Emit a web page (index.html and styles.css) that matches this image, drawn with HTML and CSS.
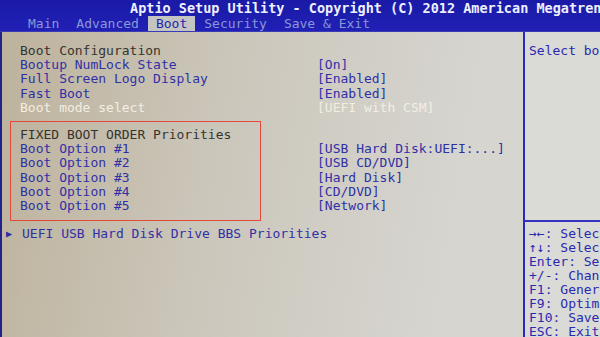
FILE: index.html
```html
<!DOCTYPE html>
<html>
<head>
<meta charset="utf-8">
<title>Aptio Setup Utility</title>
<link rel="stylesheet" href="styles.css">
</head>
<body>
<div class="screen">
	<div class="top">
		<div class="title">Aptio Setup Utility - Copyright (C) 2012 American Megatrends</div>
		<div class="tabs">
			<span class="tab">Main</span>
			<span class="tab">Advanced</span>
			<span class="tab current">Boot</span>
			<span class="tab">Security</span>
			<span class="tab">Save &amp; Exit</span>
		</div>
	</div>
	<div class="rule"></div>
	<div class="body">
		<div class="main">
			<div class="row head">Boot Configuration</div>
			<div class="row"><span class="label">Bootup NumLock State</span><span>[On]</span></div>
			<div class="row"><span class="label">Full Screen Logo Display</span><span>[Enabled]</span></div>
			<div class="row"><span class="label">Fast Boot</span><span>[Enabled]</span></div>
			<div class="row off"><span class="label">Boot mode select</span><span>[UEFI with CSM]</span></div>
			<div class="order">
				<div class="row head">FIXED BOOT ORDER Priorities</div>
				<div class="row"><span class="label">Boot Option #1</span><span>[USB Hard Disk:UEFI:...]</span></div>
				<div class="row"><span class="label">Boot Option #2</span><span>[USB CD/DVD]</span></div>
				<div class="row"><span class="label">Boot Option #3</span><span>[Hard Disk]</span></div>
				<div class="row"><span class="label">Boot Option #4</span><span>[CD/DVD]</span></div>
				<div class="row"><span class="label">Boot Option #5</span><span>[Network]</span></div>
			</div>
			<div class="row sub"><span class="arrow">&#9654;</span>UEFI USB Hard Disk Drive BBS Priorities</div>
		</div>
		<div class="help">
			<div class="about">Select boot option priorities</div>
			<div class="keys">
				<div>&rarr;&larr;: Select Screen</div>
				<div>&uarr;&darr;: Select Item</div>
				<div>Enter: Select</div>
				<div>+/-: Change Opt.</div>
				<div>F1: General Help</div>
				<div>F9: Optimized Defaults</div>
				<div>F10: Save &amp; Exit</div>
				<div>ESC: Exit</div>
			</div>
		</div>
	</div>
</div>
</body>
</html>
```

FILE: styles.css
```css
body
{
	margin:0;
	background:#c9c4b8;
	font-family:"DejaVu Sans Mono", "Liberation Mono", monospace;
	font-size:13px;
}
.screen
{
	width:600px;
	height:337px;
	overflow:hidden;
	display:flex;
	flex-direction:column;
}
.top
{
	background:linear-gradient(#1a1aa6, #2020b6);
	height:31px;
	white-space:nowrap;
}
.title
{
	height:16px;
	line-height:16px;
	padding-left:130px;
	color:#eef0ff;
	font-weight:bold;
	font-size:13.5px;
	overflow:hidden;
}
.tabs
{
	display:flex;
	gap:1px;
	padding-left:20px;
	height:15px;
	line-height:15px;
}
.tab
{
	padding:0 8px;
	color:#8c98d6;
}
.tab.current
{
	background:#c4c4c2;
	color:#2424b0;
}
.rule
{
	height:4px;
	background:#b9b9b6;
	border-bottom:1px solid #3a3ab4;
}
.body
{
	flex:1;
	display:flex;
	border-left:2px solid #22228c;
	background:linear-gradient(100deg, #bdb29c 0%, #cbc6ba 35%, #d6d5d0 75%);
}
.main
{
	width:521px;
	flex-shrink:0;
	padding:12px 0 0 4px;
	box-sizing:border-box;
	line-height:14.2px;
}
.row
{
	display:flex;
	margin-left:14px;
	color:#3030a6;
	white-space:nowrap;
}
.label
{
	width:297px;
	flex-shrink:0;
}
.row.head
{
	color:#34342e;
}
.row.off
{
	color:#f2eee2;
}
.order
{
	margin:6px 0 0 4px;
	width:251px;
	height:100px;
	box-sizing:border-box;
	border:1px solid #e4483a;
	padding:6px 0 0 9px;
}
.order .row
{
	margin-left:0;
}
.sub
{
	margin:6px 0 0 0;
}
.arrow
{
	width:16px;
	font-size:10px;
	color:#2c2ca8;
}
.help
{
	flex:1;
	border-left:2px solid #2a2ac0;
	background:#dadad6;
	color:#2a2ab0;
	white-space:nowrap;
	overflow:hidden;
	display:flex;
	flex-direction:column;
	line-height:14px;
}
.about
{
	height:188px;
	box-sizing:border-box;
	padding:12px 0 0 4px;
}
.keys
{
	border-top:2px solid #3434c0;
	padding:5px 0 0 4px;
}
```
